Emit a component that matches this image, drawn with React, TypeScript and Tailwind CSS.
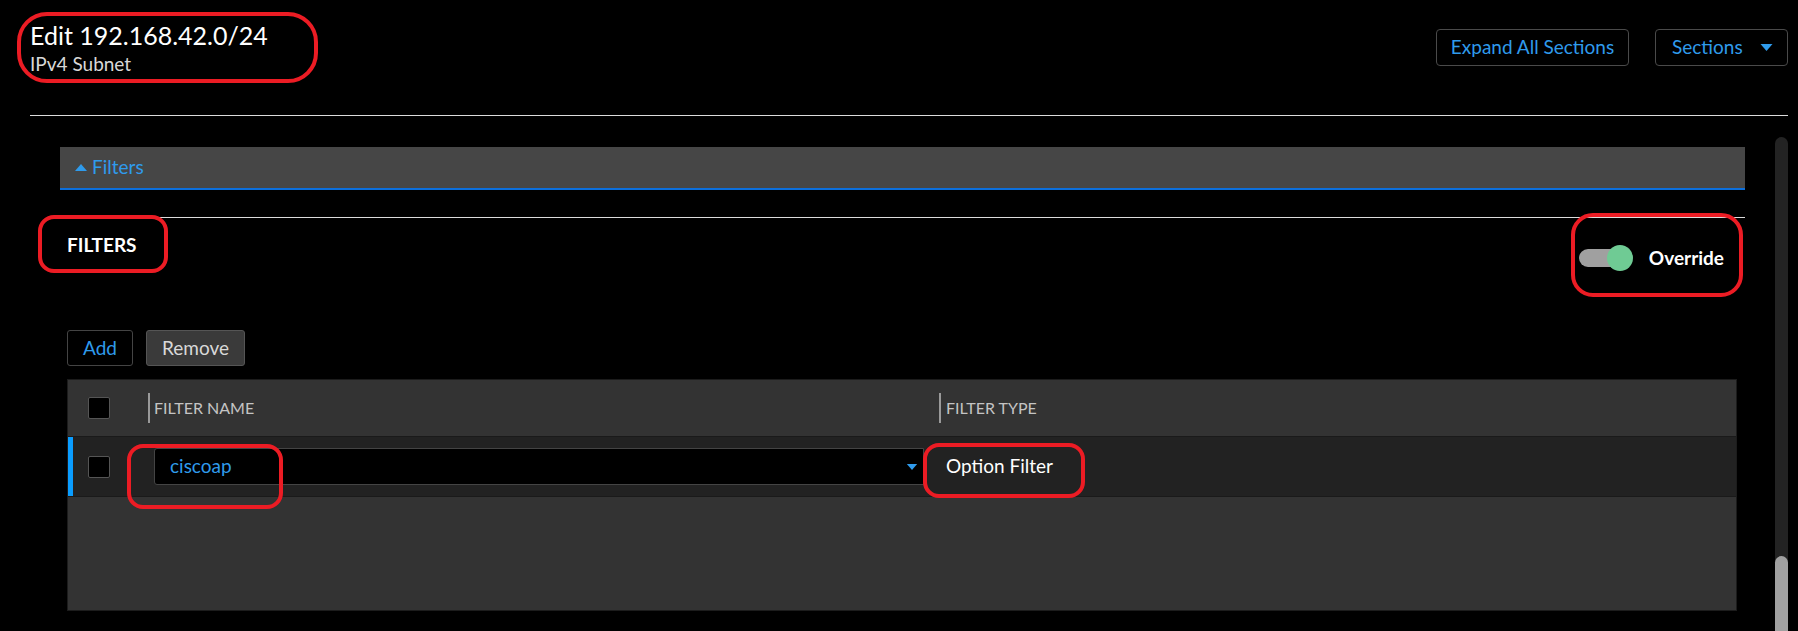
import React from "react";

const Caret = ({ up = false, className = "" }: { up?: boolean; className?: string }) => (
  <svg viewBox="0 0 12 7" className={className} fill="currentColor">
    {up ? <path d="M0 7 L6 0 L12 7 Z" /> : <path d="M0 0 L12 0 L6 7 Z" />}
  </svg>
);

const Ring = ({ className }: { className: string }) => (
  <div className={`absolute border-[4px] border-[#ec1c24] pointer-events-none ${className}`} />
);

export default function App() {
  return (
    <div className="relative h-[631px] w-full overflow-hidden bg-black font-['Lato','Noto_Sans',sans-serif] text-white">
      {/* header */}
      <div className="ml-[30px] mr-[10px] flex h-[116px] items-start justify-between border-b border-[#dcdcdc]">
        <div className="pt-[20px]">
          <div className="text-[25px] leading-[31px]">Edit 192.168.42.0/24</div>
          <div className="mt-[1px] text-[19px] leading-[24px] text-[#d8d8d8]">IPv4 Subnet</div>
        </div>
        <div className="mt-[29px] flex gap-[26px]">
          <button className="flex h-[37px] w-[193px] items-center justify-center rounded-[4px] border border-[#4a4a4a] text-[19px] text-[#2f9bec]">
            Expand All Sections
          </button>
          <button className="flex h-[37px] w-[133px] items-center justify-between rounded-[4px] border border-[#4a4a4a] pl-[16px] pr-[14px] text-[19px] text-[#2f9bec]">
            Sections
            <Caret className="h-[7px] w-[13px] text-[#2f9bec]" />
          </button>
        </div>
      </div>

      <div className="ml-[30px] flex h-[515px]">
        <div className="flex-1 px-[30px] pt-[31px]">
          {/* collapsible bar */}
          <div className="flex h-[43px] items-center gap-[5px] border-b-2 border-[#0c6fdc] bg-[#464646] pl-[15px] text-[19px] text-[#2f9bec]">
            <Caret up className="h-[7px] w-[12px]" />
            <span>Filters</span>
          </div>

          <div className="mt-[27px] border-t border-[#dcdcdc]" />

          <div className="flex justify-between">
            <div className="pl-[7px] pt-[15px] text-[19px] font-bold leading-[24px]">FILTERS</div>
            <div className="mt-[27px] flex h-[26px] items-center pr-[21px]">
              <div className="relative h-[18px] w-[48px] rounded-full bg-[#a0a0a0]">
                <div className="absolute right-[-6px] top-[-4px] h-[26px] w-[26px] rounded-full bg-[#6fcb94]" />
              </div>
              <span className="ml-[22px] text-[19px] font-bold">Override</span>
            </div>
          </div>

          <div className="ml-[7px] mt-[59px] flex gap-[13px]">
            <button className="h-[36px] w-[66px] rounded-[3px] border border-[#444] text-[19px] text-[#2f9bec]">
              Add
            </button>
            <button className="h-[36px] w-[99px] rounded-[3px] border border-[#555] bg-[#3a3a3a] text-[19px] text-[#d8d8d8]">
              Remove
            </button>
          </div>

          {/* table */}
          <div className="ml-[7px] mr-[8px] mt-[13px] h-[232px] border border-[#1c1c1c] bg-[#333333]">
            <div className="grid h-[57px] grid-cols-[80px_791px_1fr] items-center border-b border-[#1a1a1a] text-[16px] text-[#c4c4c4]">
              <div className="pl-[20px]">
                <div className="h-[22px] w-[22px] rounded-[2px] border border-[#555] bg-black" />
              </div>
              <div className="flex h-[30px] items-center border-l-2 border-[#9a9a9a] pl-[4px]">FILTER NAME</div>
              <div className="flex h-[30px] items-center border-l-2 border-[#9a9a9a] pl-[5px]">FILTER TYPE</div>
            </div>
            <div className="grid h-[60px] grid-cols-[80px_791px_1fr] items-center border-b border-[#1a1a1a] bg-[#222222]">
              <div className="flex h-full items-center">
                <div className="h-full w-[5px] bg-[#0a9dff]" />
                <div className="ml-[15px] h-[22px] w-[22px] rounded-[2px] border border-[#555] bg-black" />
              </div>
              <div className="pl-[6px] pr-[15px]">
                <div className="flex h-[37px] items-center justify-between rounded-l-[3px] border border-[#444] bg-black pl-[15px] pr-[5px] text-[19px] text-[#2f9bec]">
                  ciscoap
                  <Caret className="h-[6px] w-[12px] text-[#2f9bec]" />
                </div>
              </div>
              <div className="pl-[7px] text-[19px] text-white">Option Filter</div>
            </div>
          </div>
        </div>

        {/* scrollbar */}
        <div className="mr-[10px] mt-[21px] flex w-[13px] flex-col rounded-t-full bg-[#232323]">
          <div className="mt-auto h-[75px] rounded-t-full bg-[#a0a0a0]" />
        </div>
      </div>

      {/* annotation marks */}
      <Ring className="left-[17px] top-[12px] h-[71px] w-[301px] rounded-[30px]" />
      <Ring className="left-[38px] top-[215px] h-[58px] w-[130px] rounded-[16px]" />
      <Ring className="left-[1571px] top-[213px] h-[84px] w-[172px] rounded-[22px]" />
      <Ring className="left-[127px] top-[444px] h-[65px] w-[156px] rounded-[16px]" />
      <Ring className="left-[923px] top-[443px] h-[55px] w-[162px] rounded-[16px]" />
    </div>
  );
}
